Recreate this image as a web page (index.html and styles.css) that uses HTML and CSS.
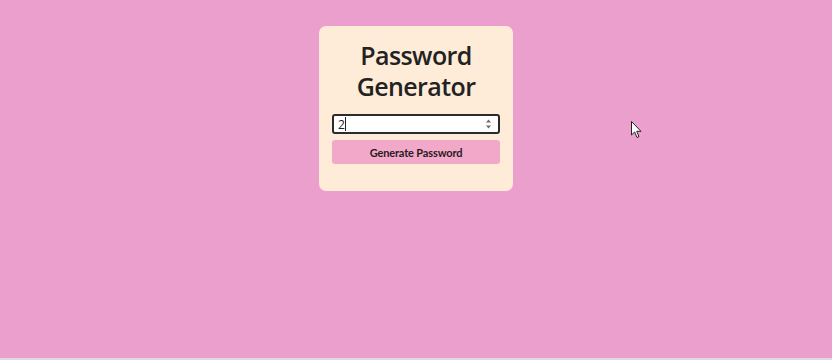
FILE: index.html
```html
<!DOCTYPE html>
<html lang="en">
<head>
<meta charset="utf-8">
<title>Password Generator</title>
<link rel="stylesheet" href="styles.css">
</head>
<body>
<main class="card">
  <h1 class="title">Password Generator</h1>
  <div class="field">
    <input class="length" type="number" value="2" min="1" max="64">
    <span class="caret"></span>
    <svg class="spinner" width="7" height="12" viewBox="0 0 7 12" aria-hidden="true">
      <path d="M1 4.5 L3.5 1.5 L6 4.5 Z M1 7.5 L3.5 10.5 L6 7.5 Z" fill="#6b6b6b"/>
    </svg>
  </div>
  <button class="generate" type="button">Generate Password</button>
</main>
<svg class="cursor" width="12" height="18" viewBox="0 0 12 18" aria-hidden="true">
  <path d="M0.5 0.5 L0.5 14 L3.6 11 L6 16.5 L8 15.6 L5.7 10.3 L10 10.3 Z" fill="#fff" stroke="#222" stroke-width="1" stroke-linejoin="round"/>
</svg>
</body>
</html>
```
FILE: styles.css
```css
html {
  background: #dddbe7;
  height: 100%;
}
body {
  margin: 0;
  height: 358px;
  background: #ea9fcd;
  display: flex;
  justify-content: center;
  align-items: flex-start;
  padding-top: 26px;
  box-sizing: border-box;
  font-family: "Open Sans", "Noto Sans", sans-serif;
  color: #222;
}
.card {
  width: 194px;
  box-sizing: border-box;
  background: #feebd8;
  border-radius: 7px;
  padding: 14px 13px 27px;
  display: flex;
  flex-direction: column;
  gap: 6px;
}
.title {
  margin: 0 0 6px;
  text-align: center;
  font-size: 25px;
  font-weight: 600;
  letter-spacing: -0.6px;
  line-height: 31px;
  color: #222;
}
.field {
  position: relative;
  display: flex;
}
.length {
  flex: 1;
  min-width: 0;
  height: 20px;
  box-sizing: border-box;
  border: 2px solid #2b2b2b;
  border-radius: 3px;
  padding: 0 4px;
  font-family: inherit;
  font-size: 12px;
  background: #fff;
  color: #222;
  outline: none;
  -moz-appearance: textfield;
}
.length::-webkit-inner-spin-button,
.length::-webkit-outer-spin-button {
  -webkit-appearance: none;
  margin: 0;
}
.caret {
  position: absolute;
  left: 13px;
  top: 3px;
  width: 1px;
  height: 14px;
  background: #222;
}
.spinner {
  position: absolute;
  right: 8px;
  top: 4px;
}
.generate {
  height: 24px;
  border: none;
  border-radius: 3px;
  background: #f2a8c8;
  font-family: "Lato", "Open Sans", sans-serif;
  font-size: 11px;
  font-weight: 700;
  letter-spacing: -0.15px;
  color: #2a1a22;
}
.cursor {
  position: absolute;
  left: 631px;
  top: 121px;
}
```
